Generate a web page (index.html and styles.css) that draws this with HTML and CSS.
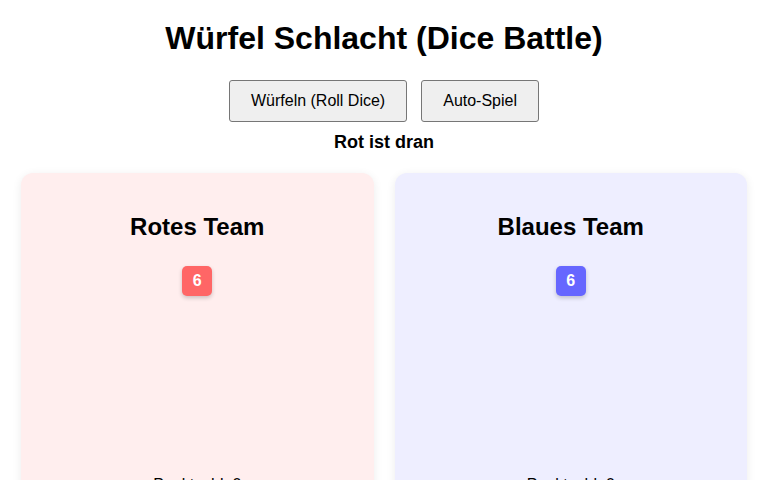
FILE: index.html
```html
<!DOCTYPE html>
<html lang="de">
<head>
<meta charset="utf-8">
<title>Würfel Schlacht</title>
<link rel="stylesheet" href="styles.css">
</head>
<body>
  <h1 class="title">Würfel Schlacht (Dice Battle)</h1>
  <div class="controls">
    <button class="btn">Würfeln (Roll Dice)</button>
    <button class="btn">Auto-Spiel</button>
  </div>
  <div class="turn">Rot ist dran</div>
  <div class="teams">
    <div class="team team-red">
      <h2 class="team-name">Rotes Team</h2>
      <div class="dice-area">
        <div class="die die-red">6</div>
      </div>
      <div class="score">Punktzahl: 0</div>
    </div>
    <div class="team team-blue">
      <h2 class="team-name">Blaues Team</h2>
      <div class="dice-area">
        <div class="die die-blue">6</div>
      </div>
      <div class="score">Punktzahl: 0</div>
    </div>
  </div>
</body>
</html>
```
FILE: styles.css
```css
* { box-sizing: border-box; }
body {
  margin: 0;
  padding: 20px;
  font-family: "Liberation Sans", Arial, sans-serif;
  color: #000;
  background: #fff;
  text-align: center;
}
.title {
  font-size: 32px;
  font-weight: bold;
  margin: 0 0 23px;
  line-height: 37px;
}
.controls {
  display: flex;
  justify-content: center;
  gap: 14px;
}
.btn {
  font-family: "Liberation Sans", Arial, sans-serif;
  font-size: 16px;
  padding: 11px 21px;
  background: #efefef;
  border: 1px solid #767676;
  border-radius: 3px;
  color: #000;
  line-height: 18px;
}
.turn {
  font-size: 18px;
  font-weight: bold;
  margin-top: 10px;
  line-height: 21px;
}
.teams {
  display: flex;
  gap: 21px;
  margin-top: 20px;
  padding: 0 1px;
}
.team {
  flex: 1;
  padding: 20px;
  border-radius: 12px;
  box-shadow: 0 2px 10px rgba(0,0,0,0.08);
  min-height: 340px;
}
.team-red { background: #ffeeee; }
.team-blue { background: #eeeeff; }
.team-name {
  font-size: 24px;
  font-weight: bold;
  margin: 20px 0;
  line-height: 28px;
}
.dice-area {
  display: flex;
  justify-content: center;
  align-items: flex-start;
  min-height: 200px;
  padding-top: 5px;
}
.die {
  width: 30px;
  height: 30px;
  border-radius: 5px;
  color: #fff;
  font-weight: bold;
  font-size: 16px;
  line-height: 30px;
  box-shadow: 0 2px 4px rgba(0,0,0,0.2);
}
.die-red { background: #ff6666; }
.die-blue { background: #6666ff; }
.score {
  font-size: 16px;
  margin-top: 15px;
}
```
